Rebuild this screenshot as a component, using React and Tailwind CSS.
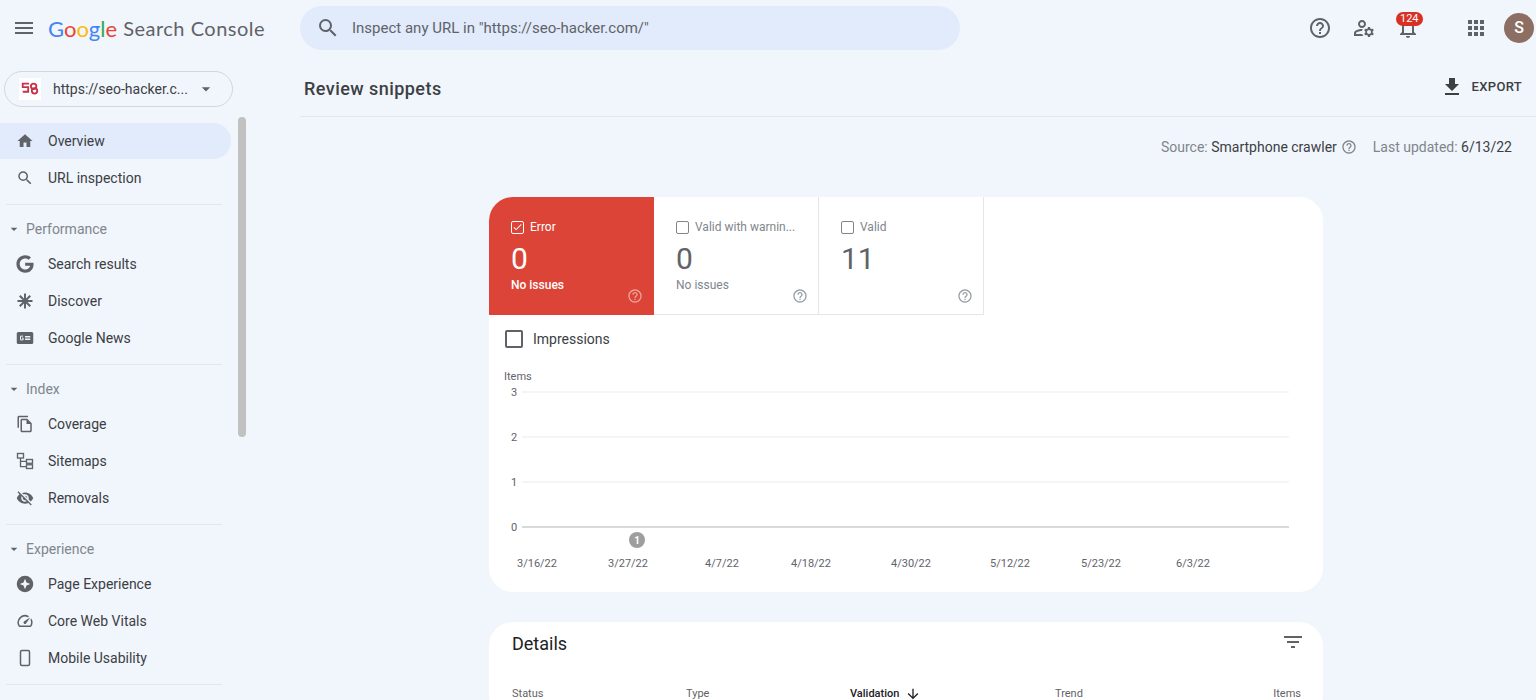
import {
  MdApps,
  MdArrowDownward,
  MdArrowDropDown,
  MdCheck,
  MdFileDownload,
  MdFilterList,
  MdHelpOutline,
  MdHome,
  MdMenu,
  MdOutlineFileCopy,
  MdOutlineManageAccounts,
  MdOutlineNotifications,
  MdOutlineSpeed,
  MdSearch,
  MdVisibilityOff,
} from 'react-icons/md'
import { FaGoogle } from 'react-icons/fa'

function DiscoverIcon(props) {
  return (
    <svg viewBox="0 0 24 24" fill="none" stroke="currentColor" strokeWidth="2.6" {...props}>
      <path d="M12 2v20M2 12h20M5 5l14 14M19 5L5 19" />
    </svg>
  )
}

function NewsIcon(props) {
  return (
    <svg viewBox="0 0 24 24" {...props}>
      <rect x="1" y="4" width="22" height="16" rx="2" fill="currentColor" />
      <path d="M9.5 9.500H6v5h3.500V12H8M12 10h7M12 12h7M12 14h7" fill="none" stroke="#f1f5fc" strokeWidth="1.300" />
    </svg>
  )
}

function SitemapIcon(props) {
  return (
    <svg viewBox="0 0 24 24" fill="none" stroke="currentColor" strokeWidth="1.800" {...props}>
      <rect x="2" y="2" width="8" height="6" />
      <rect x="14" y="10" width="8" height="5" />
      <rect x="14" y="17" width="8" height="5" />
      <path d="M6 8v11.500h8M6 12.500h8" />
    </svg>
  )
}

function PageExpIcon(props) {
  return (
    <svg viewBox="0 0 24 24" {...props}>
      <circle cx="12" cy="12" r="11" fill="currentColor" />
      <path d="M12 5l2 5 5 2-5 2-2 5-2-5-5-2 5-2z" fill="#f1f5fc" />
    </svg>
  )
}

function PhoneIcon(props) {
  return (
    <svg viewBox="0 0 24 24" fill="none" stroke="currentColor" strokeWidth="2" {...props}>
      <rect x="6" y="2" width="12" height="20" rx="2" />
    </svg>
  )
}

function Favicon() {
  return (
    <svg viewBox="0 0 22 22" className="h-5 w-5" fill="none" stroke="#c8324a" strokeWidth="2">
      <path d="M10 5H3v4h6v5H3" />
      <circle cx="15" cy="8" r="3" />
      <circle cx="16" cy="13" r="3" />
    </svg>
  )
}

function NavItem({ icon: Icon, label, active }) {
  return (
    <div className={`flex h-9 w-[231px] items-center gap-3.5 rounded-r-full pl-4 ${active ? 'bg-[#e1ebfb]' : ''}`}>
      <Icon className="h-4.5 w-4.5 shrink-0 text-[#5f6368]" />
      <span className="text-sm text-[#3c4043]">{label}</span>
    </div>
  )
}

function NavSection({ title, items }) {
  return (
    <div className="flex flex-col gap-px">
      <div className="flex h-9 items-center gap-1 pt-1 pl-1.5 text-sm text-[#80868b]">
        <MdArrowDropDown className="h-4 w-4 text-[#5f6368]" />
        {title}
      </div>
      {items.map((item) => (
        <NavItem key={item.label} {...item} />
      ))}
    </div>
  )
}

function Divider() {
  return <div className="mt-2 mb-1 ml-1.5 h-px w-[216px] bg-[#e3e6ea]" />
}

function Tile({ label, value, note, selected }) {
  return (
    <div
      className={`relative h-[118px] w-[165px] border-r border-b px-[22px] pt-[22px] ${
        selected ? 'border-[#db4437] bg-[#db4437] text-white' : 'border-[#e6e6e6] bg-white text-[#5f6368]'
      }`}
    >
      <div className="flex items-center gap-1.5 text-xs">
        <span
          className={`flex h-[13px] w-[13px] items-center justify-center rounded-xs border ${
            selected ? 'border-white' : 'border-[#80868b]'
          }`}
        >
          {selected && <MdCheck className="h-3 w-3" />}
        </span>
        <span className={`truncate ${selected ? '' : 'text-[#80868b]'}`}>{label}</span>
      </div>
      <div className="mt-1.5 text-3xl">{value}</div>
      {note && <div className={`text-xs ${selected ? 'font-medium' : 'text-[#80868b]'}`}>{note}</div>}
      <MdHelpOutline className={`absolute right-2.5 bottom-2.5 h-4 w-4 ${selected ? 'text-white/50' : 'text-[#9aa0a6]'}`} />
    </div>
  )
}

const sections = [
  {
    title: 'Performance',
    items: [
      { icon: FaGoogle, label: 'Search results' },
      { icon: DiscoverIcon, label: 'Discover' },
      { icon: NewsIcon, label: 'Google News' },
    ],
  },
  {
    title: 'Index',
    items: [
      { icon: MdOutlineFileCopy, label: 'Coverage' },
      { icon: SitemapIcon, label: 'Sitemaps' },
      { icon: MdVisibilityOff, label: 'Removals' },
    ],
  },
  {
    title: 'Experience',
    items: [
      { icon: PageExpIcon, label: 'Page Experience' },
      { icon: MdOutlineSpeed, label: 'Core Web Vitals' },
      { icon: PhoneIcon, label: 'Mobile Usability' },
    ],
  },
]

const gridLines = [
  { label: '3', y: 29 },
  { label: '2', y: 74 },
  { label: '1', y: 119 },
]

const dates = [
  { label: '3/16/22', x: 48 },
  { label: '3/27/22', x: 139 },
  { label: '4/7/22', x: 233 },
  { label: '4/18/22', x: 322 },
  { label: '4/30/22', x: 422 },
  { label: '5/12/22', x: 521 },
  { label: '5/23/22', x: 612 },
  { label: '6/3/22', x: 704 },
]

function Chart() {
  return (
    <svg viewBox="0 0 834 229" className="block h-[229px] w-full text-[11px]" fill="#5f6368">
      <text x="15" y="17">Items</text>
      {gridLines.map((line) => (
        <g key={line.label}>
          <text x="25" y={line.y + 4} textAnchor="middle">{line.label}</text>
          <line x1="33" x2="800" y1={line.y} y2={line.y} stroke="#ebebeb" />
        </g>
      ))}
      <text x="25" y="168" textAnchor="middle">0</text>
      <line x1="33" x2="800" y1="164" y2="164" stroke="#cccccc" strokeWidth="1.500" />
      <circle cx="148" cy="177" r="8" fill="#9e9e9e" />
      <text x="148" y="181" textAnchor="middle" fill="#ffffff" fontSize="10" fontWeight="700">1</text>
      {dates.map((date) => (
        <text key={date.label} x={date.x} y="204" textAnchor="middle">{date.label}</text>
      ))}
    </svg>
  )
}

export default function App() {
  return (
    <div className="flex h-[700px] flex-col overflow-hidden bg-[#f1f5fc] font-['Roboto',sans-serif]">
      <header className="flex h-14 shrink-0 items-center">
        <div className="flex w-[300px] shrink-0 items-center">
          <MdMenu className="ml-3 h-6 w-6 text-[#5f6368]" />
          <span className="ml-3 font-['Lato',sans-serif] text-[22px]">
            <span className="text-[#4285f4]">G</span>
            <span className="text-[#ea4335]">o</span>
            <span className="text-[#fbbc05]">o</span>
            <span className="text-[#4285f4]">g</span>
            <span className="text-[#34a853]">l</span>
            <span className="text-[#ea4335]">e</span>
          </span>
          <span className="ml-1.5 font-['Lato',sans-serif] text-xl tracking-wide text-[#5f6368]">Search Console</span>
        </div>
        <div className="flex h-11 w-[660px] items-center rounded-full bg-[#e1ebfb] pl-4">
          <MdSearch className="h-6 w-6 text-[#5f6368]" />
          <span className="ml-3 text-[15px] text-[#5f6368]">Inspect any URL in "https://seo-hacker.com/"</span>
        </div>
        <div className="ml-auto flex items-center pr-0.5 text-[#5f6368]">
          <div className="flex w-11 justify-center">
            <MdHelpOutline className="h-6 w-6" />
          </div>
          <div className="flex w-11 justify-center">
            <MdOutlineManageAccounts className="h-6 w-6" />
          </div>
          <div className="relative flex w-11 justify-center">
            <MdOutlineNotifications className="h-6 w-6" />
            <span className="absolute -top-1 left-2.5 rounded-full bg-[#d93025] px-1 text-[11px] leading-[14px] text-white">124</span>
          </div>
          <div className="ml-6 flex w-11 justify-center">
            <MdApps className="h-6 w-6" />
          </div>
          <div className="ml-1.5 flex h-7.5 w-7.5 items-center justify-center rounded-full bg-[#8d6e63] text-base font-medium text-white">S</div>
        </div>
      </header>

      <div className="mt-px flex min-h-0 flex-1">
        <aside className="relative w-60 shrink-0 pt-3.5">
          <div className="ml-1 flex h-9 w-[229px] items-center rounded-full border border-[#d3d7dc] pr-4 pl-3.5">
            <span className="flex h-[22px] w-[22px] items-center justify-center bg-white">
              <Favicon />
            </span>
            <span className="ml-3 flex-1 text-sm text-[#3c4043]">https://seo-hacker.c...</span>
            <MdArrowDropDown className="h-5 w-5 text-[#5f6368]" />
          </div>

          <div className="mt-4 flex flex-col gap-px">
            <NavItem icon={MdHome} label="Overview" active />
            <NavItem icon={MdSearch} label="URL inspection" />
          </div>
          {sections.map((section) => (
            <div key={section.title}>
              <Divider />
              <NavSection {...section} />
            </div>
          ))}
          <Divider />

          <div className="absolute top-15 -right-1.5 h-80 w-2 rounded-full bg-[#c1c1c1]" />
        </aside>

        <main className="ml-15 min-w-0 flex-1 overflow-hidden">
          <div className="flex h-15 items-center justify-between border-b border-[#e3e6ea] pr-3.5 pl-1">
            <h1 className="mt-1 text-lg font-medium tracking-wide text-[#3c4043]">Review snippets</h1>
            <div className="flex items-center gap-2 text-[13px] font-medium tracking-wide text-[#3c4043]">
              <MdFileDownload className="h-6 w-6" />
              EXPORT
            </div>
          </div>

          <div className="flex items-center justify-end gap-1 pt-5 pr-6 text-sm text-[#80868b]">
            <span>
              Source: <span className="text-[#3c4043]">Smartphone crawler</span>
            </span>
            <MdHelpOutline className="h-4 w-4" />
            <span className="ml-3">
              Last updated: <span className="text-[#3c4043]">6/13/22</span>
            </span>
          </div>

          <div className="mt-10 flex justify-center pr-6">
            <div className="flex w-[834px] flex-col gap-7.5">
              <section className="overflow-hidden rounded-3xl bg-white">
                <div className="flex">
                  <Tile label="Error" value="0" note="No issues" selected />
                  <Tile label="Valid with warnin..." value="0" note="No issues" />
                  <Tile label="Valid" value="11" />
                </div>
                <div className="flex h-12 items-center gap-2.5 pl-4">
                  <span className="h-[18px] w-[18px] rounded-xs border-2 border-[#5f6368]" />
                  <span className="text-sm text-[#3c4043]">Impressions</span>
                </div>
                <Chart />
              </section>

              <section className="rounded-3xl bg-white pt-2 pr-4.5 pb-4 pl-[23px]">
                <div className="flex items-center justify-between">
                  <h2 className="text-lg text-[#202124]">Details</h2>
                  <MdFilterList className="-mt-1 h-6 w-6 text-[#5f6368]" />
                </div>
                <div className="mt-7 flex text-[11px] text-[#5f6368]">
                  <span className="w-[174px]">Status</span>
                  <span className="w-[164px]">Type</span>
                  <span className="flex w-[205px] items-center gap-1.5 font-medium text-[#202124]">
                    Validation
                    <MdArrowDownward className="h-4 w-4" />
                  </span>
                  <span>Trend</span>
                  <span className="mr-1 ml-auto">Items</span>
                </div>
              </section>
            </div>
          </div>
        </main>
      </div>
    </div>
  )
}
